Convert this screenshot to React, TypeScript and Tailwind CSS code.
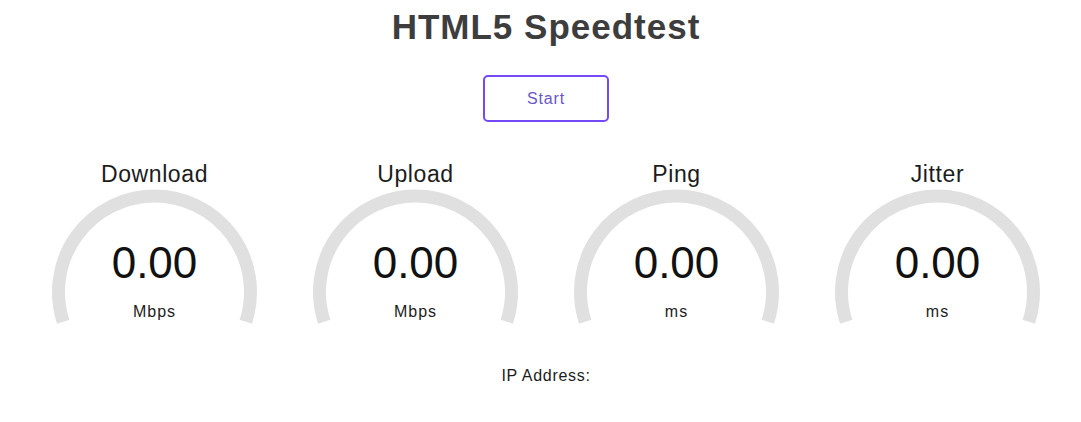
import React from "react";

interface GaugeProps {
  name: string;
  value: string;
  unit: string;
}

// arc runs from -198deg to 18deg (canvas style, y down), through the top
const CX = 105.5;
const CY = 106;
const R = 96;

function point(deg: number) {
  const rad = (deg * Math.PI) / 180;
  return `${(CX + R * Math.cos(rad)).toFixed(2)} ${(CY + R * Math.sin(rad)).toFixed(2)}`;
}

function Gauge({ name, value, unit }: GaugeProps) {
  const d = `M ${point(162)} A ${R} ${R} 0 1 1 ${point(18)}`;
  return (
    <div className="w-[261px] flex flex-col items-center">
      <div className="text-[23px] leading-none tracking-[0.6px] text-[#1c1c1c]">{name}</div>
      <div className="relative w-[211px] h-[140px]">
        <svg width="211" height="140" viewBox="0 0 211 140" className="block">
          <path d={d} fill="none" stroke="#e0e0e0" strokeWidth="13" strokeLinecap="butt" />
        </svg>
        <div className="absolute left-0 right-0 top-[55.5px] text-center text-[44px] leading-none text-[#111]">
          {value}
        </div>
        <div className="absolute left-0 right-0 top-[118px] text-center text-[16px] leading-none tracking-[1px] text-[#1c1c1c]">
          {unit}
        </div>
      </div>
    </div>
  );
}

export default function App() {
  const gauges: GaugeProps[] = [
    { name: "Download", value: "0.00", unit: "Mbps" },
    { name: "Upload", value: "0.00", unit: "Mbps" },
    { name: "Ping", value: "0.00", unit: "ms" },
    { name: "Jitter", value: "0.00", unit: "ms" },
  ];

  return (
    <div className="min-h-[422px] bg-white pl-[11px] font-['Liberation_Sans',Arial,sans-serif]">
      <div className="flex flex-col items-center text-center">
        <h1 className="mt-[9px] text-[35px] leading-none font-bold tracking-[1px] text-[#3d3d3d]">
          HTML5 Speedtest
        </h1>
        <button
          type="button"
          className="mt-[31px] w-[126px] h-[47px] rounded-[5px] border-2 border-[#7449f7] bg-transparent text-[16px] tracking-[0.8px] text-[#6a56c8]"
        >
          Start
        </button>
        <div className="mt-[40.5px] flex justify-center">
          {gauges.map((g) => (
            <Gauge key={g.name} {...g} />
          ))}
        </div>
        <div className="mt-[42px] text-[16px] leading-none tracking-[0.7px] text-[#1c1c1c]">
          IP Address:
        </div>
      </div>
    </div>
  );
}
